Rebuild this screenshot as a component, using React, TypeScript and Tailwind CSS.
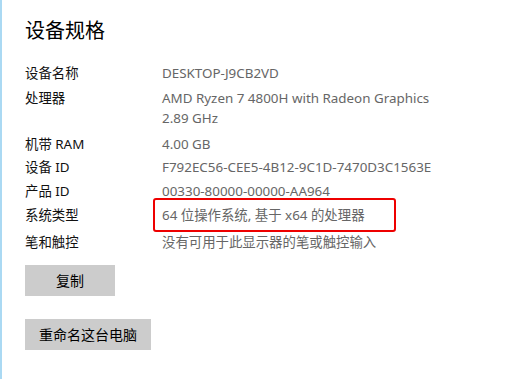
const SPECS: { label: string; value: string[]; mt: string }[] = [
  { label: "设备名称", value: ["DESKTOP-J9CB2VD"], mt: "mt-0" },
  { label: "处理器", value: ["AMD Ryzen 7 4800H with Radeon Graphics", "2.89 GHz"], mt: "mt-[5px]" },
  { label: "机带 RAM", value: ["4.00 GB"], mt: "mt-[6px]" },
  { label: "设备 ID", value: ["F792EC56-CEE5-4B12-9C1D-7470D3C1563E"], mt: "mt-[3px]" },
  { label: "产品 ID", value: ["00330-80000-00000-AA964"], mt: "mt-[4px]" },
];

const font = "font-['Segoe_UI','Noto_Sans','Noto_Sans_CJK_SC',sans-serif]";

export default function App() {
  return (
    <div className={`w-[529px] h-[379px] bg-white border-l-2 border-[#aad9f3] pl-[23px] pt-[18px] overflow-hidden ${font}`}>
      <h1 className="text-[20px] leading-[26px] text-black font-normal">设备规格</h1>

      <div className="mt-[19px] text-[13.4px] leading-[20px]">
        {SPECS.map((s) => (
          <div key={s.label} className={`flex ${s.mt}`}>
            <div className="w-[137px] text-[#111111]">{s.label}</div>
            <div className="text-[#666666]">
              {s.value.map((v) => (
                <div key={v}>{v}</div>
              ))}
            </div>
          </div>
        ))}

        <div className="flex mt-[4px]">
          <div className="w-[137px] text-[#111111]">系统类型</div>
          <div className="relative text-[#666666]">
            64 位操作系统, 基于 x64 的处理器
            <span className="absolute left-[-9px] top-[-7px] w-[243px] h-[34px] border-2 border-[#ee0000] rounded-[3px]" />
          </div>
        </div>

        <div className="flex mt-[7px]">
          <div className="w-[137px] text-[#111111]">笔和触控</div>
          <div className="text-[#666666]">没有可用于此显示器的笔或触控输入</div>
        </div>
      </div>

      <button className="mt-[13px] block w-[90px] h-[31px] bg-[#cccccc] text-[14px] text-black">复制</button>
      <button className="mt-[23px] block w-[126px] h-[31px] bg-[#cccccc] text-[14px] text-black">重命名这台电脑</button>
    </div>
  );
}
